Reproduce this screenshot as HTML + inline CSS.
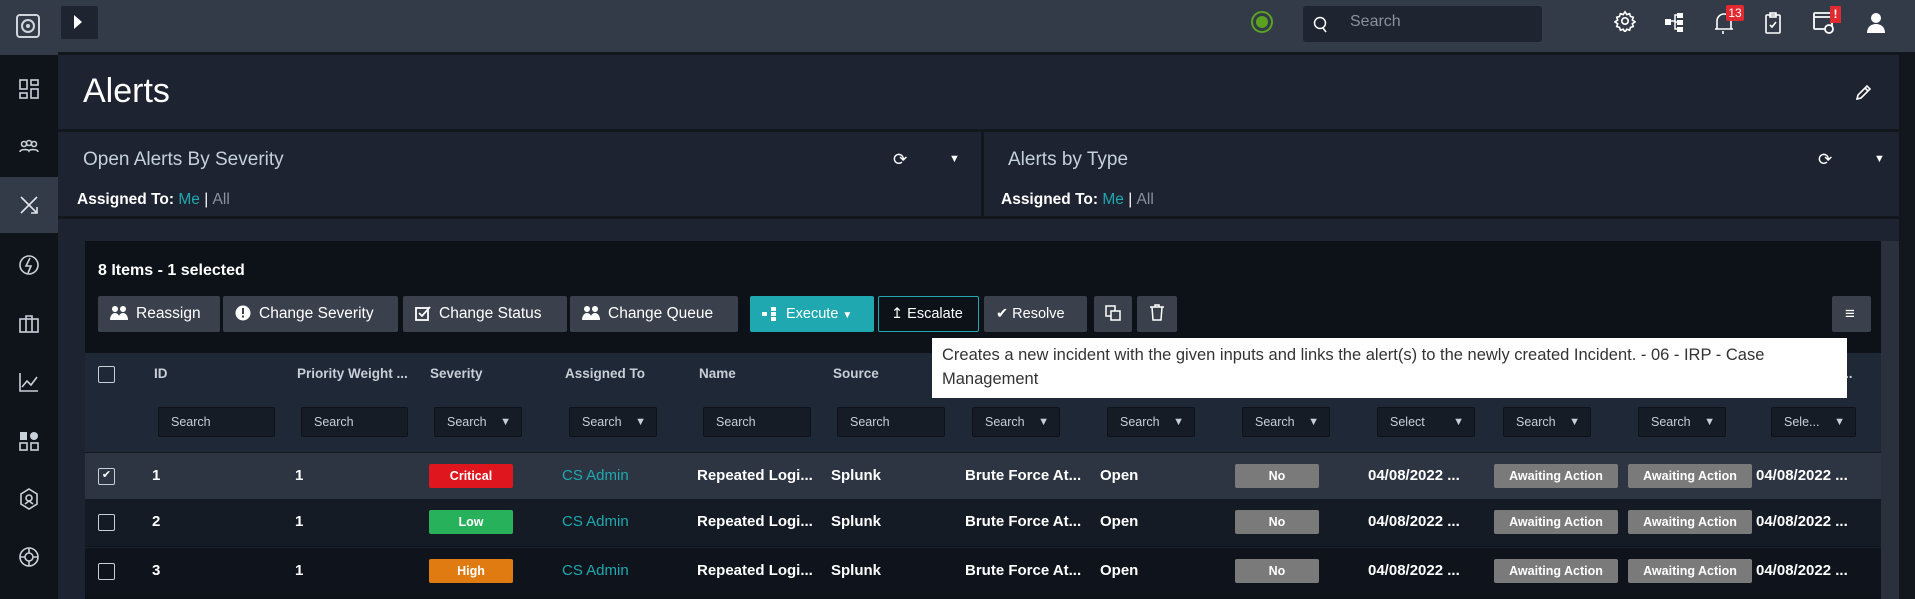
<!DOCTYPE html>
<html><head><meta charset="utf-8"><style>
*{box-sizing:border-box;margin:0;padding:0}
body{width:1915px;height:599px;overflow:hidden;background:#1d2330;font-family:"Liberation Sans",sans-serif;color:#fff;position:relative}
.a{position:absolute}
.side{left:0;top:0;width:58px;height:599px;background:#0f131a}
.ic{position:absolute;left:17px;width:24px;height:24px}
.top{left:58px;top:0;width:1857px;height:55px;background:#333b48;border-bottom:3px solid #12161d}
.btn{position:absolute;top:296px;height:36px;background:#3a414d;color:#fff;font-size:15.5px;line-height:36px;padding-left:12px;border-radius:2px;white-space:nowrap}
.btn svg{vertical-align:-3px;margin-right:8px}
.th{position:absolute;top:366px;font-size:13.5px;font-weight:bold;color:#c8ced6}
.flt{position:absolute;top:407px;height:30px;background:#161c26;border:1px solid #0e1219;color:#c8ced6;font-size:12.5px;line-height:28px;padding-left:12px;border-radius:2px}
.flt b{position:absolute;right:10px;top:0;font-size:11px}
.row{position:absolute;left:85px;width:1796px;height:47px}
.cell{position:absolute;font-size:15px;font-weight:bold;color:#fff;top:14px;white-space:nowrap}
.bd{position:absolute;top:11px;height:24px;font-size:12.5px;font-weight:bold;text-align:center;line-height:24px;color:#fff;border-radius:2px}
.cb{position:absolute;left:13px;top:15px;width:17px;height:17px;border:1.5px solid #c8ced6;border-radius:2px}
</style></head><body>
<div class="a side">
 <div class="a" style="left:0;top:0;width:58px;height:55px;background:#333b48"></div>
 <svg class="a" style="left:15px;top:13px" width="26" height="26" viewBox="0 0 26 26"><rect x="2" y="2" width="22" height="22" rx="3" fill="none" stroke="#d0d5dc" stroke-width="2"/><circle cx="13" cy="13" r="6" fill="none" stroke="#d0d5dc" stroke-width="2"/><circle cx="13" cy="13" r="2" fill="#d0d5dc"/></svg>
 <svg class="ic" style="top:77px" viewBox="0 0 24 24" fill="none" stroke="#c8d0da" stroke-width="1.6"><rect x="3" y="3" width="7" height="9"/><rect x="14" y="3" width="7" height="5"/><rect x="3" y="16" width="7" height="5"/><rect x="14" y="12" width="7" height="9"/></svg>
 <svg class="ic" style="top:135px" viewBox="0 0 24 24" fill="none" stroke="#c8d0da" stroke-width="1.6"><circle cx="7" cy="9" r="2.5"/><circle cx="12" cy="8" r="2.5"/><circle cx="17" cy="9" r="2.5"/><path d="M3 17c0-3 8-3 9-1 1-2 9-2 9 1"/></svg>
 <div class="a" style="left:0;top:177px;width:58px;height:56px;background:#333b48"></div>
 <svg class="ic" style="top:193px" viewBox="0 0 24 24" fill="none" stroke="#e0e4ea" stroke-width="1.6"><path d="M4 4l16 16M14 20h6v-6M4 20L20 4"/></svg>
 <svg class="ic" style="top:253px" viewBox="0 0 24 24" fill="none" stroke="#c8d0da" stroke-width="1.6"><circle cx="12" cy="12" r="9"/><path d="M13 5l-4 8h5l-3 7"/></svg>
 <svg class="ic" style="top:312px" viewBox="0 0 24 24" fill="none" stroke="#c8d0da" stroke-width="1.6"><rect x="3" y="7" width="18" height="13"/><path d="M9 7V4h6v3M9 7v13M15 7v13"/></svg>
 <svg class="ic" style="top:370px" viewBox="0 0 24 24" fill="none" stroke="#c8d0da" stroke-width="1.6"><path d="M3 3v18h18M5 17l5-6 4 4 6-8"/></svg>
 <svg class="ic" style="top:429px" viewBox="0 0 24 24" fill="#c8d0da"><rect x="3" y="3" width="7" height="8"/><circle cx="17" cy="7" r="4"/><rect x="3" y="14" width="7" height="7" fill="none" stroke="#c8d0da" stroke-width="1.6"/><rect x="14" y="14" width="7" height="7" fill="none" stroke="#c8d0da" stroke-width="1.6"/></svg>
 <svg class="ic" style="top:487px" viewBox="0 0 24 24" fill="none" stroke="#c8d0da" stroke-width="1.6"><path d="M12 2l8 5v10l-8 5-8-5V7z"/><circle cx="12" cy="11" r="3"/><path d="M8 17l4-3 4 3"/></svg>
 <svg class="ic" style="top:545px" viewBox="0 0 24 24" fill="none" stroke="#c8d0da" stroke-width="1.6"><circle cx="12" cy="12" r="9"/><circle cx="12" cy="12" r="4"/><path d="M12 3v5M12 16v5M3 12h5M16 12h5"/></svg>
</div>
<div class="a top"></div>
<div class="a" style="left:61px;top:6px;width:37px;height:33px;background:#1e2430;border-radius:2px"></div>
<svg class="a" style="left:72px;top:14px" width="12" height="16"><path d="M2 1l8 7-8 7z" fill="#fff"/></svg>
<svg class="a" style="left:1250px;top:10px" width="24" height="24" viewBox="0 0 24 24"><circle cx="12" cy="12" r="10" fill="none" stroke="#5aa220" stroke-width="2"/><circle cx="12" cy="12" r="6" fill="#5aa220"/></svg>
<div class="a" style="left:1303px;top:6px;width:239px;height:36px;background:#1e2430;border-radius:3px"></div>
<svg class="a" style="left:1313px;top:16px" width="16" height="18"><circle cx="7" cy="7" r="5.5" fill="none" stroke="#fff" stroke-width="1.5"/><path d="M10 12l3 4" stroke="#fff" stroke-width="1.5"/></svg>
<div class="a" style="left:1350px;top:13px;font-size:16px;color:#8a929e">Search</div>
<svg class="a" style="left:1614px;top:10px" width="22" height="22" viewBox="0 0 24 24" fill="none" stroke="#fff" stroke-width="1.8"><circle cx="12" cy="12" r="3.5"/><path d="M12 2l2 3 3-1 1 3 3 1-1 3 3 2-3 2 1 3-3 1-1 3-3-1-2 3-2-3-3 1-1-3-3-1 1-3-3-2 3-2-1-3 3-1 1-3 3 1z"/></svg>
<svg class="a" style="left:1664px;top:11px" width="22" height="22" viewBox="0 0 22 22" fill="#fff"><rect x="1" y="8" width="6" height="6"/><rect x="13" y="2" width="6" height="5"/><rect x="13" y="9" width="6" height="5"/><rect x="13" y="16" width="6" height="5"/><path d="M7 10h4V4h2M11 11h2M11 10v8h2" stroke="#fff" stroke-width="1.5" fill="none"/></svg>
<svg class="a" style="left:1713px;top:11px" width="22" height="24" viewBox="0 0 22 24" fill="none" stroke="#fff" stroke-width="1.6"><path d="M4 18V10a7 7 0 0114 0v8zM2 18h18M10 20v3"/></svg>
<div class="a" style="left:1726px;top:5px;width:18px;height:16px;background:#e02a30;font-size:12px;line-height:16px;text-align:center;border-radius:2px">13</div>
<svg class="a" style="left:1764px;top:11px" width="18" height="24" viewBox="0 0 18 24" fill="none" stroke="#fff" stroke-width="1.6"><rect x="2" y="4" width="14" height="18" rx="1"/><rect x="6" y="2" width="6" height="4"/><path d="M6 14l2 2 4-5"/></svg>
<svg class="a" style="left:1812px;top:10px" width="26" height="26" viewBox="0 0 26 26" fill="none" stroke="#fff" stroke-width="1.8"><rect x="2" y="3" width="18" height="16" rx="1"/><path d="M2 7h18"/><circle cx="17" cy="19" r="4" fill="#333b48"/></svg>
<div class="a" style="left:1830px;top:6px;width:11px;height:17px;background:#e02a30;font-size:12px;line-height:17px;text-align:center;font-weight:bold">!</div>
<svg class="a" style="left:1866px;top:12px" width="20" height="22" viewBox="0 0 20 22" fill="#fff"><circle cx="10" cy="6" r="5"/><path d="M1 21c0-6 4-9 9-9s9 3 9 9z"/></svg>

<div class="a" style="left:60px;top:57px;width:1839px;height:72px;background:#1d2330"></div>
<div class="a" style="left:83px;top:72px;font-size:34px;color:#fff">Alerts</div>
<svg class="a" style="left:1854px;top:84px" width="18" height="18" viewBox="0 0 18 18" fill="none" stroke="#fff" stroke-width="1.6"><path d="M3 15l1-4L13 2l3 3-9 9zM11 4l3 3"/></svg>
<div class="a" style="left:58px;top:129px;width:1857px;height:3px;background:#12161d"></div>
<div class="a" style="left:981px;top:132px;width:3px;height:84px;background:#12161d"></div>
<div class="a" style="left:58px;top:216px;width:1857px;height:3px;background:#12161d"></div>
<div class="a" style="left:1899px;top:55px;width:16px;height:544px;background:#12161d"></div>
<div class="a" style="left:83px;top:149px;font-size:19px;color:#c4d0dc">Open Alerts By Severity</div>
<div class="a" style="left:1008px;top:149px;font-size:19px;color:#c4d0dc">Alerts by Type</div>
<div class="a" style="left:77px;top:191px;font-size:15.5px;font-weight:bold">Assigned To: <span style="color:#1fa8b0;font-weight:normal">Me</span> <span style="font-weight:normal">|</span> <span style="color:#8a929e;font-weight:normal">All</span></div>
<div class="a" style="left:1001px;top:191px;font-size:15.5px;font-weight:bold">Assigned To: <span style="color:#1fa8b0;font-weight:normal">Me</span> <span style="font-weight:normal">|</span> <span style="color:#8a929e;font-weight:normal">All</span></div>
<div class="a" style="left:893px;top:150px;font-size:17px;color:#fff">⟳</div>
<div class="a" style="left:949px;top:153px;font-size:11px;color:#fff">▼</div>
<div class="a" style="left:1818px;top:150px;font-size:17px;color:#fff">⟳</div>
<div class="a" style="left:1874px;top:153px;font-size:11px;color:#fff">▼</div>

<div class="a" style="left:85px;top:241px;width:1796px;height:358px;background:#0d1118"></div>
<div class="a" style="left:1881px;top:241px;width:18px;height:358px;background:#2a313c"></div>
<div class="a" style="left:98px;top:262px;font-size:16px;font-weight:bold">8 Items - 1 selected</div>
<div class="btn" style="left:98px;width:122px"><svg width="18" height="16" viewBox="0 0 18 16" fill="#fff"><circle cx="5" cy="4" r="3"/><circle cx="13" cy="4" r="3"/><path d="M0 15c0-5 3-7 5-7s5 2 5 7zM8 15c0-5 3-7 5-7s5 2 5 7z"/></svg>Reassign</div>
<div class="btn" style="left:223px;width:175px"><svg width="16" height="16" viewBox="0 0 16 16"><circle cx="8" cy="8" r="7.5" fill="#fff"/><rect x="7" y="3" width="2" height="6" fill="#3a414d"/><rect x="7" y="10.5" width="2" height="2" fill="#3a414d"/></svg>Change Severity</div>
<div class="btn" style="left:403px;width:164px"><svg width="16" height="16" viewBox="0 0 16 16" fill="none" stroke="#fff" stroke-width="1.8"><rect x="1" y="3" width="12" height="12"/><path d="M4 8l3 3 8-9"/></svg>Change Status</div>
<div class="btn" style="left:570px;width:168px"><svg width="18" height="16" viewBox="0 0 18 16" fill="#fff"><circle cx="5" cy="4" r="3"/><circle cx="13" cy="4" r="3"/><path d="M0 15c0-5 3-7 5-7s5 2 5 7zM8 15c0-5 3-7 5-7s5 2 5 7z"/></svg>Change Queue</div>
<div class="btn" style="left:750px;width:124px;background:#1fa8b0;font-size:14.5px"><svg width="16" height="14" viewBox="0 0 16 14" fill="#fff"><rect x="0" y="5" width="5" height="4"/><rect x="9" y="0" width="5" height="4"/><rect x="9" y="5" width="5" height="4"/><rect x="9" y="10" width="5" height="4"/></svg>Execute <span style="font-size:10px">▼</span></div>
<div class="btn" style="left:878px;width:101px;background:#0d1118;border:1px solid #1fa8b0;font-size:14.5px;line-height:34px">↥ Escalate</div>
<div class="btn" style="left:984px;width:103px;font-size:14.5px">✔ Resolve</div>
<div class="btn" style="left:1094px;width:38px;padding-left:11px"><svg width="16" height="16" viewBox="0 0 16 16" fill="none" stroke="#fff" stroke-width="1.5"><rect x="1" y="1" width="9" height="10"/><rect x="6" y="6" width="9" height="9" fill="#3a414d"/></svg></div>
<div class="btn" style="left:1137px;width:40px;padding-left:13px"><svg width="14" height="17" viewBox="0 0 14 17" fill="none" stroke="#fff" stroke-width="1.5"><path d="M0 3h14M5 3V1h4v2M2 3l1 13h8l1-13"/></svg></div>
<div class="btn" style="left:1832px;width:39px;padding-left:13px;font-size:17px">≡</div>

<div class="a" style="left:85px;top:353px;width:1796px;height:99px;background:#1f2836"></div>
<div class="cb" style="left:98px;top:366px"></div>
<div class="th" style="left:154px">ID</div>
<div class="th" style="left:297px">Priority Weight ...</div>
<div class="th" style="left:430px">Severity</div>
<div class="th" style="left:565px">Assigned To</div>
<div class="th" style="left:699px">Name</div>
<div class="th" style="left:833px">Source</div>
<div class="th" style="left:1845px">..</div>
<div class="flt" style="left:158px;width:117px">Search</div>
<div class="flt" style="left:301px;width:107px">Search</div>
<div class="flt" style="left:434px;width:88px">Search<b>▼</b></div>
<div class="flt" style="left:569px;width:88px">Search<b>▼</b></div>
<div class="flt" style="left:703px;width:108px">Search</div>
<div class="flt" style="left:837px;width:108px">Search</div>
<div class="flt" style="left:972px;width:88px">Search<b>▼</b></div>
<div class="flt" style="left:1107px;width:88px">Search<b>▼</b></div>
<div class="flt" style="left:1242px;width:88px">Search<b>▼</b></div>
<div class="flt" style="left:1377px;width:98px">Select<b>▼</b></div>
<div class="flt" style="left:1503px;width:88px">Search<b>▼</b></div>
<div class="flt" style="left:1638px;width:88px">Search<b>▼</b></div>
<div class="flt" style="left:1771px;width:85px">Sele...<b>▼</b></div>

<div class="a" style="left:932px;top:338px;width:915px;height:60px;background:#fff;color:#333;font-size:16.5px;line-height:24px;padding:5px 10px">Creates a new incident with the given inputs and links the alert(s) to the newly created Incident. - 06 - IRP - Case Management</div>

<div class="row" style="top:452px;background:#2e3542;border-top:1px solid #12161d">
 <div class="cb" style="font-size:11px;line-height:13px;text-align:center">✔</div>
 <div class="cell" style="left:67px">1</div><div class="cell" style="left:210px">1</div>
 <div class="bd" style="left:344px;width:84px;background:#e0161e">Critical</div>
 <div class="cell" style="left:477px;color:#1fa8b0;font-weight:normal">CS Admin</div>
 <div class="cell" style="left:612px">Repeated Logi...</div><div class="cell" style="left:746px">Splunk</div>
 <div class="cell" style="left:880px">Brute Force At...</div><div class="cell" style="left:1015px">Open</div>
 <div class="bd" style="left:1150px;width:84px;background:#7a7a7a">No</div>
 <div class="cell" style="left:1283px">04/08/2022 ...</div>
 <div class="bd" style="left:1409px;width:124px;background:#7a7a7a">Awaiting Action</div>
 <div class="bd" style="left:1543px;width:124px;background:#7a7a7a">Awaiting Action</div>
 <div class="cell" style="left:1671px">04/08/2022 ...</div>
</div>
<div class="row" style="top:499px;background:#151b25">
 <div class="cb"></div>
 <div class="cell" style="left:67px">2</div><div class="cell" style="left:210px">1</div>
 <div class="bd" style="left:344px;width:84px;background:#27b15a">Low</div>
 <div class="cell" style="left:477px;color:#1fa8b0;font-weight:normal">CS Admin</div>
 <div class="cell" style="left:612px">Repeated Logi...</div><div class="cell" style="left:746px">Splunk</div>
 <div class="cell" style="left:880px">Brute Force At...</div><div class="cell" style="left:1015px">Open</div>
 <div class="bd" style="left:1150px;width:84px;background:#7a7a7a">No</div>
 <div class="cell" style="left:1283px">04/08/2022 ...</div>
 <div class="bd" style="left:1409px;width:124px;background:#7a7a7a">Awaiting Action</div>
 <div class="bd" style="left:1543px;width:124px;background:#7a7a7a">Awaiting Action</div>
 <div class="cell" style="left:1671px">04/08/2022 ...</div>
</div>
<div class="row" style="top:547px;background:#0f141c;border-top:1px solid #1c2330">
 <div class="cb"></div>
 <div class="cell" style="left:67px">3</div><div class="cell" style="left:210px">1</div>
 <div class="bd" style="left:344px;width:84px;background:#e07b12">High</div>
 <div class="cell" style="left:477px;color:#1fa8b0;font-weight:normal">CS Admin</div>
 <div class="cell" style="left:612px">Repeated Logi...</div><div class="cell" style="left:746px">Splunk</div>
 <div class="cell" style="left:880px">Brute Force At...</div><div class="cell" style="left:1015px">Open</div>
 <div class="bd" style="left:1150px;width:84px;background:#7a7a7a">No</div>
 <div class="cell" style="left:1283px">04/08/2022 ...</div>
 <div class="bd" style="left:1409px;width:124px;background:#7a7a7a">Awaiting Action</div>
 <div class="bd" style="left:1543px;width:124px;background:#7a7a7a">Awaiting Action</div>
 <div class="cell" style="left:1671px">04/08/2022 ...</div>
</div>
</body></html>
